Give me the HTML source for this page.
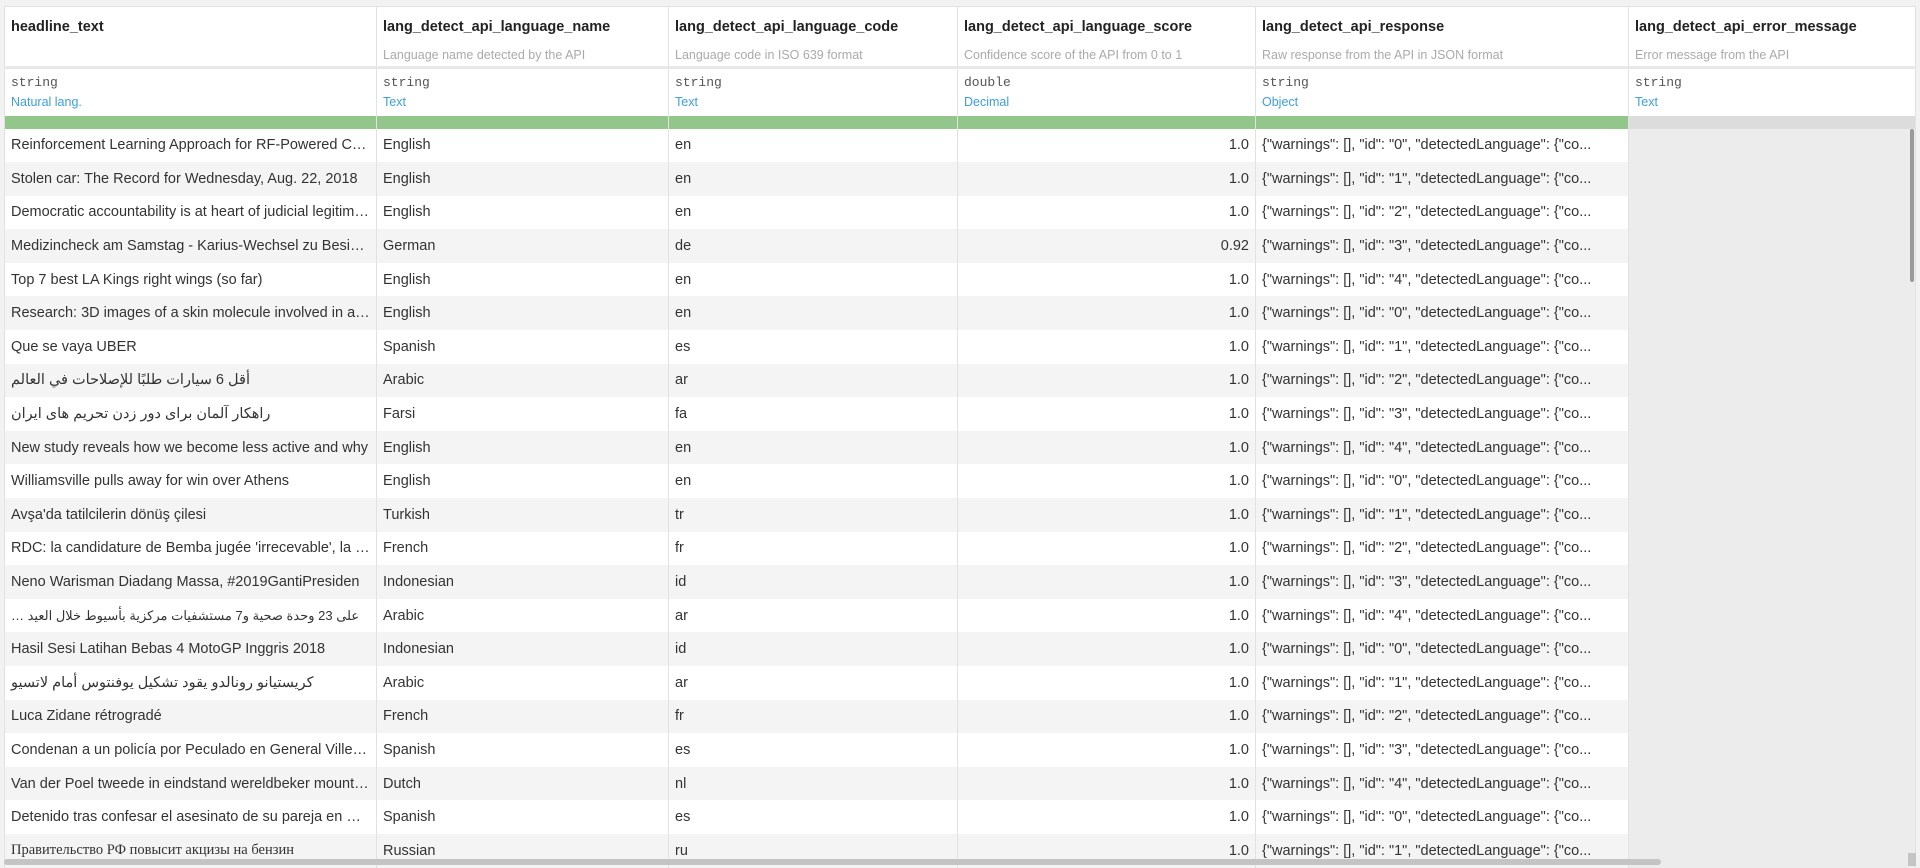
<!DOCTYPE html>
<html><head><meta charset="utf-8">
<style>
*{margin:0;padding:0;box-sizing:border-box}
body{width:1920px;height:866px;background:#f2f2f2;overflow:hidden;font-family:"Liberation Sans","Noto Sans CJK SC",sans-serif;position:relative}
table{position:absolute;left:4px;top:6px;border-collapse:collapse;table-layout:fixed;width:1911px}
td{border-left:1px solid #e2e2e2;border-right:1px solid #e2e2e2;padding:0 6px;white-space:nowrap;overflow:hidden;text-overflow:ellipsis;font-size:14.5px;color:#333}
tr.nm td{height:40px;background:#fff;font-weight:bold;font-size:14.5px;color:#222;vertical-align:bottom;padding-bottom:12px;border-top:1px solid #e2e2e2}
tr.ds td{height:21px;background:#fff;font-size:12.5px;color:#aaa;vertical-align:top;padding-top:1px}
tr.ty td{height:48px;background:#fff;border-top:3px solid #e8e8e8;vertical-align:top;padding-top:5px;line-height:23px}
.mono{font-family:"Liberation Mono",monospace;font-size:13px;color:#555;display:block;line-height:18px}
.mn{color:#3da0d8;font-size:12.5px;display:block;line-height:20px}
tr.gr td{height:13px;background:#93c68a;padding:0}
tr.gr td.e{background:#dcdcdc}
tr.r td{height:33.6px;background:#fff}
tr.r:nth-child(even) td{background:#f4f4f4}
tr.r td.e{background:#ececec}
tr.r td.n{text-align:right}
td.ar{text-overflow:clip;font-size:13px;direction:rtl;text-align:left}
.vs{position:absolute;left:1910px;top:129px;width:4px;height:153px;background:#9a9a9a;border-radius:2px}
.hs{position:absolute;left:4px;top:859px;width:1657px;height:6px;background:#c4c4c4;border-radius:3px}
.hs2{position:absolute;left:1908px;top:853px;width:8px;height:13px;background:#c4c4c4}
</style></head><body>
<table>
<colgroup><col style="width:372px"><col style="width:292px"><col style="width:289px"><col style="width:298px"><col style="width:373px"><col style="width:287px"></colgroup>
<tr class="nm"><td>headline_text</td><td>lang_detect_api_language_name</td><td>lang_detect_api_language_code</td><td>lang_detect_api_language_score</td><td>lang_detect_api_response</td><td>lang_detect_api_error_message</td></tr>
<tr class="ds"><td></td><td>Language name detected by the API</td><td>Language code in ISO 639 format</td><td>Confidence score of the API from 0 to 1</td><td>Raw response from the API in JSON format</td><td>Error message from the API</td></tr>
<tr class="ty"><td><span class="mono">string</span><span class="mn">Natural lang.</span></td><td><span class="mono">string</span><span class="mn">Text</span></td><td><span class="mono">string</span><span class="mn">Text</span></td><td><span class="mono">double</span><span class="mn">Decimal</span></td><td><span class="mono">string</span><span class="mn">Object</span></td><td><span class="mono">string</span><span class="mn">Text</span></td></tr>
<tr class="gr"><td></td><td></td><td></td><td></td><td></td><td class="e"></td></tr>
<tr class="r"><td>Reinforcement Learning Approach for RF-Powered Cognitive Radio</td><td>English</td><td>en</td><td class="n">1.0</td><td>{"warnings": [], "id": "0", "detectedLanguage": {"co...</td><td class="e"></td></tr>
<tr class="r"><td>Stolen car: The Record for Wednesday, Aug. 22, 2018</td><td>English</td><td>en</td><td class="n">1.0</td><td>{"warnings": [], "id": "1", "detectedLanguage": {"co...</td><td class="e"></td></tr>
<tr class="r"><td>Democratic accountability is at heart of judicial legitimacy</td><td>English</td><td>en</td><td class="n">1.0</td><td>{"warnings": [], "id": "2", "detectedLanguage": {"co...</td><td class="e"></td></tr>
<tr class="r"><td>Medizincheck am Samstag - Karius-Wechsel zu Besiktas</td><td>German</td><td>de</td><td class="n">0.92</td><td>{"warnings": [], "id": "3", "detectedLanguage": {"co...</td><td class="e"></td></tr>
<tr class="r"><td>Top 7 best LA Kings right wings (so far)</td><td>English</td><td>en</td><td class="n">1.0</td><td>{"warnings": [], "id": "4", "detectedLanguage": {"co...</td><td class="e"></td></tr>
<tr class="r"><td>Research: 3D images of a skin molecule involved in allergies</td><td>English</td><td>en</td><td class="n">1.0</td><td>{"warnings": [], "id": "0", "detectedLanguage": {"co...</td><td class="e"></td></tr>
<tr class="r"><td>Que se vaya UBER</td><td>Spanish</td><td>es</td><td class="n">1.0</td><td>{"warnings": [], "id": "1", "detectedLanguage": {"co...</td><td class="e"></td></tr>
<tr class="r"><td>أقل 6 سيارات طلبًا للإصلاحات في العالم</td><td>Arabic</td><td>ar</td><td class="n">1.0</td><td>{"warnings": [], "id": "2", "detectedLanguage": {"co...</td><td class="e"></td></tr>
<tr class="r"><td>راهکار آلمان برای دور زدن تحریم های ایران</td><td>Farsi</td><td>fa</td><td class="n">1.0</td><td>{"warnings": [], "id": "3", "detectedLanguage": {"co...</td><td class="e"></td></tr>
<tr class="r"><td>New study reveals how we become less active and why</td><td>English</td><td>en</td><td class="n">1.0</td><td>{"warnings": [], "id": "4", "detectedLanguage": {"co...</td><td class="e"></td></tr>
<tr class="r"><td>Williamsville pulls away for win over Athens</td><td>English</td><td>en</td><td class="n">1.0</td><td>{"warnings": [], "id": "0", "detectedLanguage": {"co...</td><td class="e"></td></tr>
<tr class="r"><td>Avşa'da tatilcilerin dönüş çilesi</td><td>Turkish</td><td>tr</td><td class="n">1.0</td><td>{"warnings": [], "id": "1", "detectedLanguage": {"co...</td><td class="e"></td></tr>
<tr class="r"><td>RDC: la candidature de Bemba jugée 'irrecevable', la CPI</td><td>French</td><td>fr</td><td class="n">1.0</td><td>{"warnings": [], "id": "2", "detectedLanguage": {"co...</td><td class="e"></td></tr>
<tr class="r"><td>Neno Warisman Diadang Massa, #2019GantiPresiden</td><td>Indonesian</td><td>id</td><td class="n">1.0</td><td>{"warnings": [], "id": "3", "detectedLanguage": {"co...</td><td class="e"></td></tr>
<tr class="r"><td class="ar">على 23 وحدة صحية و7 مستشفيات مركزية بأسيوط خلال العيد …</td><td>Arabic</td><td>ar</td><td class="n">1.0</td><td>{"warnings": [], "id": "4", "detectedLanguage": {"co...</td><td class="e"></td></tr>
<tr class="r"><td>Hasil Sesi Latihan Bebas 4 MotoGP Inggris 2018</td><td>Indonesian</td><td>id</td><td class="n">1.0</td><td>{"warnings": [], "id": "0", "detectedLanguage": {"co...</td><td class="e"></td></tr>
<tr class="r"><td>كريستيانو رونالدو يقود تشكيل يوفنتوس أمام لاتسيو</td><td>Arabic</td><td>ar</td><td class="n">1.0</td><td>{"warnings": [], "id": "1", "detectedLanguage": {"co...</td><td class="e"></td></tr>
<tr class="r"><td>Luca Zidane rétrogradé</td><td>French</td><td>fr</td><td class="n">1.0</td><td>{"warnings": [], "id": "2", "detectedLanguage": {"co...</td><td class="e"></td></tr>
<tr class="r"><td>Condenan a un policía por Peculado en General Villegas</td><td>Spanish</td><td>es</td><td class="n">1.0</td><td>{"warnings": [], "id": "3", "detectedLanguage": {"co...</td><td class="e"></td></tr>
<tr class="r"><td>Van der Poel tweede in eindstand wereldbeker mountainbike</td><td>Dutch</td><td>nl</td><td class="n">1.0</td><td>{"warnings": [], "id": "4", "detectedLanguage": {"co...</td><td class="e"></td></tr>
<tr class="r"><td>Detenido tras confesar el asesinato de su pareja en Madrid</td><td>Spanish</td><td>es</td><td class="n">1.0</td><td>{"warnings": [], "id": "0", "detectedLanguage": {"co...</td><td class="e"></td></tr>
<tr class="r"><td style="font-family:'Liberation Serif',serif">Правительство РФ повысит акцизы на бензин</td><td>Russian</td><td>ru</td><td class="n">1.0</td><td>{"warnings": [], "id": "1", "detectedLanguage": {"co...</td><td class="e"></td></tr>
</table>
<div class="vs"></div>
<div class="hs"></div>
<div class="hs2"></div>
</body></html>
